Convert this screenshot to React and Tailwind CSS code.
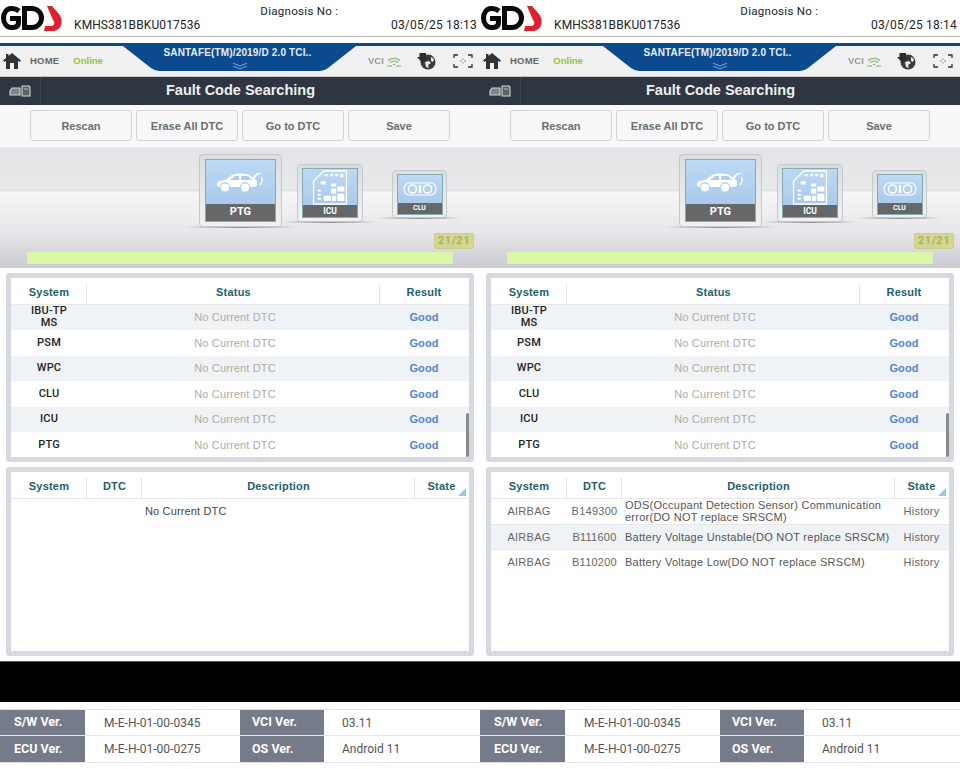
const roboto = { fontFamily: 'Roboto, "Liberation Sans", sans-serif' };
const arial = { fontFamily: '"Liberation Sans", Arial, sans-serif' };

const systems = [
  { name: 'IBU-TP MS', wrap: true },
  { name: 'PSM' },
  { name: 'WPC' },
  { name: 'CLU' },
  { name: 'ICU' },
  { name: 'PTG' },
];

const dtcs = [
  ['B149300', 'ODS(Occupant Detection Sensor) Communication error(DO NOT replace SRSCM)'],
  ['B111600', 'Battery Voltage Unstable(DO NOT replace SRSCM)'],
  ['B110200', 'Battery Voltage Low(DO NOT replace SRSCM)'],
];

function GdsLogo() {
  return (
    <svg width="62" height="28" viewBox="0 0 62 28" className="shrink-0">
      <path d="M18 7 Q15 4.5 11 4.5 H10 A7.5 9.5 0 0 0 10 23.5 H12 Q17.5 23.5 17.5 18 V14.5 H9" fill="none" stroke="#0a0a0a" strokeWidth="5" />
      <path d="M23.5 4.5 H31 A9.5 9.5 0 0 1 31 23.5 H23.5 Z" fill="none" stroke="#0a0a0a" strokeWidth="5" />
      <path d="M46 2 H51 L58 10 C63 16 61 27 51 27 H43 L44 22 H50 C54 22 54 18 52 16 Z" fill="#e0202e" />
    </svg>
  );
}

function HomeIcon() {
  return (
    <svg width="18" height="16" viewBox="0 0 18 16">
      <path d="M9 0 L18 7.5 L16.5 9 L15 7.8 V16 H11 V10 H7 V16 H3 V7.8 L1.5 9 L0 7.5 L3 5 V1 H5.5 V3 Z" fill="#333" />
    </svg>
  );
}

function VciIcon() {
  return (
    <svg width="14" height="10" viewBox="0 0 14 10" fill="none" stroke="#6cbd5a" strokeWidth="1.2">
      <path d="M1 3.5 Q7 -1 13 3.5" />
      <path d="M3 5.5 Q7 2.5 11 5.5" />
      <path d="M0 9 H5 M9 9 H14 M6 7.5 H8" />
    </svg>
  );
}

function GlobeIcon() {
  return (
    <svg width="19" height="17" viewBox="0 0 19 17">
      <circle cx="11" cy="9" r="7.5" fill="#3a3a3a" />
      <path d="M8 9 L12 8 L14 10 L11 12 L12 15 L9 14 Z M14 4 L17 6 L16 9 L14 8 Z" fill="#e9e9e9" />
      <path d="M2.5 0 H9 V4 H11.5 L5.5 10 L0 4 H2.5 Z" fill="#2c2c2c" />
    </svg>
  );
}

function FocusIcon() {
  return (
    <svg width="20" height="14" viewBox="0 0 20 14" fill="none" stroke="#333" strokeWidth="1.3">
      <path d="M1 4 V1 H5 M15 1 H19 V4 M19 10 V13 H15 M5 13 H1 V10" />
      <path d="M7 7 H9 M11 7 H13 M10 4.5 V6 M10 8 V9.5" stroke="#777" strokeWidth="0.8" />
    </svg>
  );
}

function CarDocIcon() {
  return (
    <svg width="22" height="12" viewBox="0 0 22 12" fill="none" stroke="#d4d7da" strokeWidth="1.1">
      <path d="M1 10 V6 L3 3 H11 V10 Z" fill="#7f848a" />
      <path d="M13 1 H20 L21 2 V11 H13 Z" fill="#5d6268" />
      <path d="M15 4 H19" strokeWidth="0.8" />
    </svg>
  );
}

function CarIcon() {
  return (
    <svg width="48" height="20" viewBox="0 0 48 20" fill="#fff">
      <path d="M0 12 C0 9 3 8.5 8 8 L15 3 C22 1 30 1 34 4 L40 9 L40 13 L38 15 H33 A5 5 0 0 0 23 15 H13 A5 5 0 0 0 3 15 H1 Z" />
      <circle cx="8" cy="15.5" r="4" />
      <circle cx="28" cy="15.5" r="4" />
      <path d="M18 4 L13 8 H22 V4 Z M24 4 V8 H35 L31 4 Z" fill="#b0cdec" />
      <path d="M35 7 L39 1.5 L46 1 L40 3 L37 8 Z" />
      <path d="M44 5 Q47 8 43 13" fill="none" stroke="#fff" strokeWidth="1.4" />
    </svg>
  );
}

function ChipIcon() {
  return (
    <svg width="36" height="35" viewBox="0 0 34 34" fill="#fff">
      <path d="M11 1 H33 V33 H1 V11 Z" fill="none" stroke="#fff" strokeWidth="1.3" />
      <path d="M12 4 h3 v2 h-3 Z M17 4 h3 v2 h-3 Z M22 4 h3 v2 h-3 Z M27 4 h3 v3 h-3 Z M8 11 h5 v3 h-5 Z M18 13 h5 v3 h-5 Z M18 18 h5 v5 h-5 Z M24 16 h7 v5 h-7 Z M24 23 h7 v7 h-7 Z M11 25 h7 v5 h-7 Z M19 25 h4 v5 h-4 Z M5 19 h3 v2 h-3 Z M5 23 h3 v2 h-3 Z M5 27 h3 v2 h-3 Z" />
    </svg>
  );
}

function GaugeIcon() {
  return (
    <svg width="34" height="15" viewBox="0 0 34 15" fill="none" stroke="#fff">
      <path d="M5 2 H29 Q33 4 33 8 Q33 13 28 14 H6 Q1 13 1 8 Q1 4 5 2 Z" strokeWidth="1.2" />
      <circle cx="9.5" cy="8" r="4" strokeWidth="1.6" />
      <circle cx="24.5" cy="8" r="4" strokeWidth="1.6" />
      <path d="M17 4 V12" strokeWidth="2.4" />
    </svg>
  );
}

function Tile({ label, outer, inner, labelClass, mt, children }) {
  return (
    <div className={`relative shrink-0 ${mt}`}>
      <div className={`${outer} rounded-[4px] border border-[#c5c6ca] bg-gradient-to-b from-[#dcdde0] to-[#f1f1f2] flex items-center justify-center relative z-10`}>
        <div className={`${inner} border border-[#7fadb0] bg-gradient-to-b from-[#bcd8f5] to-[#a4c5e8] flex flex-col`}>
          <div className="flex-1 flex items-center justify-center">{children}</div>
          <div className={`${labelClass} bg-[#666769] text-white font-bold flex items-center justify-center`}>{label}</div>
        </div>
      </div>
      <div className="absolute -left-[14px] -right-[14px] -bottom-[1px] h-[2px] bg-gradient-to-r from-transparent via-[#8f9094] to-transparent" />
    </div>
  );
}

function Panel({ className, children }) {
  return (
    <div className={`relative mx-[6px] border-[5px] border-[#d6dae0] rounded-[3px] bg-white overflow-hidden ${className}`}>
      {children}
    </div>
  );
}

function HeadCell({ children, last }) {
  return (
    <div className={`flex items-center justify-center pt-[2px] text-[11px] font-bold text-[#1b6269] tracking-[0.2px] h-[25.5px] ${last ? '' : 'relative'}`}>
      {children}
      {!last && <span className="absolute right-0 top-[6px] bottom-0 w-px bg-[#e3e5e8]" />}
    </div>
  );
}

function Pane({ time, hasDtc }) {
  return (
    <div className="w-[480px] shrink-0 flex flex-col overflow-hidden">
      {/* top info */}
      <div className="h-[37px] border-b border-[#b5b5b5] bg-white flex" style={roboto}>
        <div className="pt-[4px] pl-[1px]"><GdsLogo /></div>
        <div className="ml-[11px] pt-[18px] text-[12px] leading-[15px] tracking-[0.1px] text-[#222]">KMHS381BBKU017536</div>
        <div className="ml-[60px] pt-[4px] text-[11.5px] leading-[14px] tracking-[0.3px] text-[#222]">Diagnosis No :</div>
        <div className="ml-auto pr-[3px] pt-[18px] text-[12px] leading-[15px] tracking-[0.2px] text-[#222]">{time}</div>
      </div>

      {/* nav */}
      <div className="h-[6px] bg-white" />
      <div className="h-[3px] bg-[#0b4a8e]" />
      <div className="h-[31px] bg-[#f1f1f1] border-b border-[#c4c4c4] flex items-start" style={arial}>
        <div className="w-[123px] h-full flex items-center shrink-0">
          <div className="ml-[3px]"><HomeIcon /></div>
          <span className="ml-[9px] text-[9.5px] font-bold text-[#666] tracking-[0.2px]">HOME</span>
          <span className="ml-[14px] text-[9.5px] font-bold text-[#8cc63f]">Online</span>
        </div>
        <div className="relative w-[233px] h-[25px] shrink-0 flex flex-col items-center">
          <svg className="absolute inset-0" width="233" height="25" viewBox="0 0 233 25">
            <path d="M0 0 H233 L205 22 Q201 25 197 25 H36 Q32 25 28 22 Z" fill="#0b4a8e" />
          </svg>
          <span className="relative text-[10px] leading-[12px] font-bold text-[#e8eef6] tracking-[0.15px] mt-[1px] -ml-[4px]">SANTAFE(TM)/2019/D 2.0 TCI..</span>
          <svg className="relative mt-[3px]" width="16" height="8" viewBox="0 0 16 8" fill="none" stroke="#7fa3cb" strokeWidth="1">
            <path d="M1 1 L8 4 L15 1 M1 4 L8 7 L15 4" />
          </svg>
        </div>
        <div className="flex-1 h-full flex items-center">
          <span className="ml-[12px] text-[9.5px] font-bold text-[#9a9a9a]">VCI</span>
          <div className="ml-[3px] mt-[1px]"><VciIcon /></div>
          <div className="ml-[16px]"><GlobeIcon /></div>
          <div className="ml-[17px]"><FocusIcon /></div>
        </div>
      </div>

      {/* title */}
      <div className="h-[28px] bg-[#2e3641] flex items-center" style={arial}>
        <div className="w-[41px] h-full flex items-center justify-center border-r border-[#3b434e]"><CarDocIcon /></div>
        <div className="w-[399px] text-center text-[14.5px] font-bold text-[#eef0f2]">Fault Code Searching</div>
      </div>

      {/* toolbar */}
      <div className="h-[43px] bg-[#f8f8f8] border-b border-[#ececec] flex items-start gap-[4px] pl-[30px] pt-[5px]" style={arial}>
        {['Rescan', 'Erase All DTC', 'Go to DTC', 'Save'].map(b => (
          <button key={b} className="w-[102px] h-[31px] pt-[1px] rounded-[3px] border border-[#d2d3d5] bg-[#f8f8f8] text-[11px] font-bold text-[#6a6e71]">{b}</button>
        ))}
      </div>

      {/* progress banner */}
      <div className="h-[120px] bg-[linear-gradient(180deg,#e3e4e7_0%,#e9e9eb_34%,#dcdde0_35%,#f6f6f7_37%,#e7e7ea_70%,#c9cad2_100%)] flex flex-col" style={roboto}>
        <div className="h-[85px] pl-[199px] flex items-start">
          <Tile label="PTG" mt="mt-[6px]" outer="w-[83px] h-[73px]" inner="w-[71px] h-[63px]" labelClass="h-[17px] text-[11px]"><div className="mb-[1px]"><CarIcon /></div></Tile>
          <div className="w-[15px] shrink-0" />
          <Tile label="ICU" mt="mt-[16px]" outer="w-[66px] h-[58px]" inner="w-[56px] h-[50px]" labelClass="h-[12px] text-[8.5px]"><ChipIcon /></Tile>
          <div className="w-[29px] shrink-0" />
          <Tile label="CLU" mt="mt-[22px]" outer="w-[55px] h-[48px]" inner="w-[46px] h-[41px]" labelClass="h-[11px] text-[7px]"><GaugeIcon /></Tile>
        </div>
        <div className="h-[16px] w-[40px] ml-[434px] bg-[#d3d78f] border border-[#c9cd8c] rounded-[2px] flex items-center justify-center text-[11px] font-bold text-[#a9b06a] tracking-[0.6px]">21/21</div>
        <div className="mt-[3px] ml-[27px] w-[426px] h-[12px] bg-[#dbf6a8] rounded-[1px]" />
      </div>

      {/* tables */}
      <div className="h-[393px] bg-white pt-[5px] flex flex-col gap-[5px]" style={arial}>
        <Panel className="h-[189px]">
          <div className="grid grid-cols-[76px_293px_88px] border-b border-[#e6e8ea]">
            <HeadCell>System</HeadCell>
            <HeadCell>Status</HeadCell>
            <HeadCell last>Result</HeadCell>
          </div>
          {systems.map((s, i) => (
            <div key={s.name} className={`grid grid-cols-[76px_293px_88px] items-center h-[25.5px] text-[11px] ${i % 2 === 0 ? 'bg-[#f0f3f5]' : 'bg-white'}`}>
              <div className={`text-center font-medium text-[#222] tracking-[0.2px] leading-[12px] ${s.wrap ? 'px-[14px]' : ''}`} style={roboto}>{s.name}</div>
              <div className="text-center text-[#acacac] tracking-[0.15px] pl-[3px]">No Current DTC</div>
              <div className="text-center font-bold text-[#4f86d2] tracking-[0.1px]">Good</div>
            </div>
          ))}
          <div className="absolute right-0 top-[135px] w-[3px] h-[44px] rounded-[2px] bg-[#8a8a8a]" />
        </Panel>

        <Panel className="h-[189px]">
          <div className="grid grid-cols-[76px_55px_273px_53px] border-b border-[#e6e8ea]">
            <HeadCell>System</HeadCell>
            <HeadCell>DTC</HeadCell>
            <HeadCell>Description</HeadCell>
            <HeadCell last>State</HeadCell>
          </div>
          <svg className="absolute right-[3px] top-[16px]" width="8" height="8" viewBox="0 0 8 8"><path d="M8 0 V8 H0 Z" fill="#8fd0dc" /></svg>
          {hasDtc ? dtcs.map(([code, desc], i) => (
            <div key={code} className={`grid grid-cols-[76px_55px_273px_53px] items-center h-[25.5px] text-[11px] text-[#666] tracking-[0.25px] ${i === 1 ? 'bg-[#f0f3f5] border-y border-[#e6e8ea]' : 'bg-white'}`}>
              <div className="text-center">AIRBAG</div>
              <div className="text-center">{code}</div>
              <div className="pl-[3px] leading-[12px] text-[#555]">{desc}</div>
              <div className="text-center">History</div>
            </div>
          )) : (
            <div className="h-[25.5px] flex items-center pl-[134px] text-[11px] text-[#444] tracking-[0.15px]">No Current DTC</div>
          )}
        </Panel>
      </div>
    </div>
  );
}

function FooterHalf() {
  const rows = [
    ['S/W Ver.', 'M-E-H-01-00-0345', 'VCI Ver.', '03.11'],
    ['ECU Ver.', 'M-E-H-01-00-0275', 'OS Ver.', 'Android 11'],
  ];
  return (
    <div className="w-[480px] shrink-0 border-t border-b border-[#e4e4e6]">
      {rows.map((r, i) => (
        <div key={r[0]} className={`grid grid-cols-[85px_155px_84px_156px] h-[26px] ${i === 0 ? 'border-b border-[#e8e8ea]' : ''}`}>
          <div className="bg-[#767b89] text-white font-bold text-[12.5px] flex items-center pl-[14px]">{r[0]}</div>
          <div className="text-[12px] text-[#555] flex items-center pl-[19px]">{r[1]}</div>
          <div className="bg-[#767b89] text-white font-bold text-[12.5px] flex items-center pl-[12px]">{r[2]}</div>
          <div className="text-[12px] text-[#555] flex items-center pl-[18px]">{r[3]}</div>
        </div>
      ))}
    </div>
  );
}

export default function App() {
  return (
    <div className="w-[960px] h-[769px] bg-white flex flex-col overflow-hidden" style={roboto}>
      <div className="flex">
        <Pane time="03/05/25 18:13" hasDtc={false} />
        <Pane time="03/05/25 18:14" hasDtc />
      </div>
      <div className="h-[41px] bg-black shrink-0 border-t border-[#555]" />
      <div className="flex mt-[7px]">
        <FooterHalf />
        <FooterHalf />
      </div>
    </div>
  );
}
